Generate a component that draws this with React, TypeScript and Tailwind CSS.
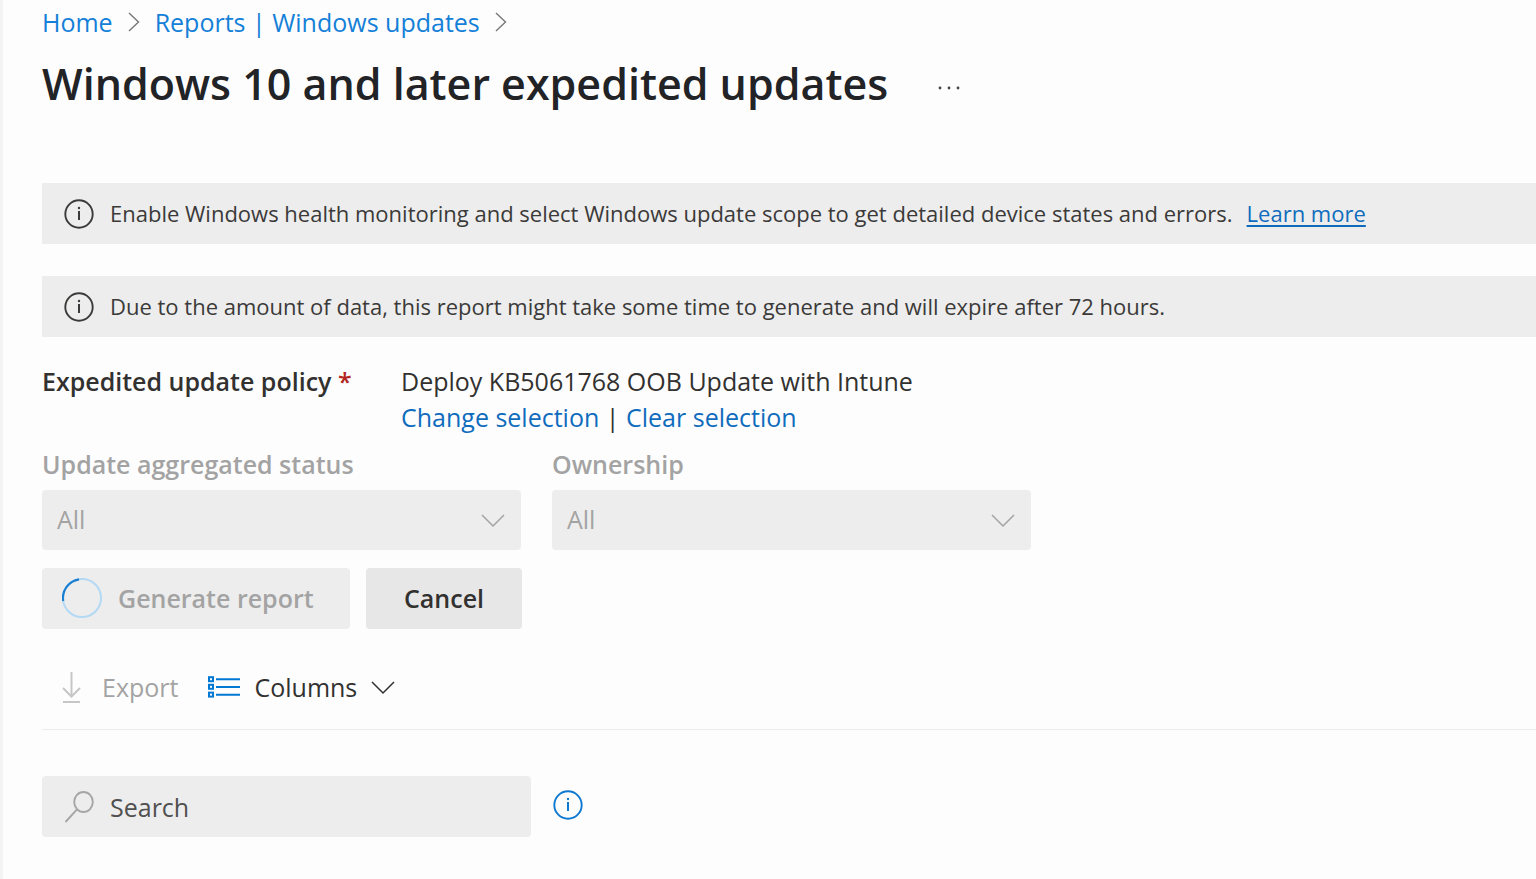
import React, { useState } from 'react';

interface IconProps {
  className?: string;
}

const ChevronRight: React.FC<IconProps> = ({ className }) => (
  <svg className={className} width="12" height="20" viewBox="0 0 12 20" fill="none" stroke="currentColor" strokeWidth="1.4" aria-hidden="true">
    <path d="M1 1 L10.5 10 L1 19" />
  </svg>
);

const ChevronDown: React.FC<IconProps> = ({ className }) => (
  <svg className={className} width="24" height="14" viewBox="0 0 24 14" fill="none" stroke="currentColor" strokeWidth="1.5" aria-hidden="true">
    <path d="M1 1 L12 12 L23 1" />
  </svg>
);

const InfoIcon: React.FC<IconProps> = ({ className }) => (
  <svg className={className} width="30" height="30" viewBox="0 0 30 30" fill="none" stroke="currentColor" aria-hidden="true">
    <circle cx="15" cy="15" r="13.7" strokeWidth="1.9" />
    <path d="M15 12 V21" strokeWidth="2" />
    <circle cx="15" cy="9" r="1.2" fill="currentColor" stroke="none" />
  </svg>
);

const Spinner = () => (
  <svg width="40" height="42" viewBox="0 0 40 42" fill="none" aria-hidden="true">
    <circle cx="20" cy="20" r="19" stroke="#b3d9f5" strokeWidth="2" />
    <path d="M1.2 23 A19 19 0 0 1 17 1.3" stroke="#1a7fd0" strokeWidth="2.2" />
  </svg>
);

const DownloadIcon = () => (
  <svg width="20" height="32" viewBox="0 0 20 32" fill="none" stroke="#c6c6c6" strokeWidth="2" aria-hidden="true">
    <path d="M9.5 0 V25" />
    <path d="M1 16 L9.5 24.5 L18 16" />
    <path d="M1 30 H18" />
  </svg>
);

const ColumnsIcon = () => (
  <svg width="32" height="24" viewBox="0 0 32 24" fill="none" stroke="#0078d4" strokeWidth="2" aria-hidden="true">
    <rect x="1" y="1.2" width="4" height="4" />
    <rect x="1" y="8.8" width="4" height="4" />
    <rect x="1" y="16.6" width="4" height="4" />
    <path d="M8 3.3 H32 M8 11 H32 M8 18.7 H32" />
  </svg>
);

const SearchIcon: React.FC<IconProps> = ({ className }) => (
  <svg className={className} width="30" height="32" viewBox="0 0 30 32" fill="none" stroke="#a6a6a6" strokeWidth="1.9" aria-hidden="true">
    <ellipse cx="19.5" cy="11" rx="9.3" ry="10" />
    <path d="M13 18.3 L1.5 31" />
  </svg>
);

interface FilterProps {
  id: string;
  label: string;
}

const Filter: React.FC<FilterProps> = ({ id, label }) => (
  <div className="w-[479px]">
    <label htmlFor={id} className="block text-[25px] leading-9 font-semibold text-[#a3a3a3]">
      {label}
    </label>
    <div className="relative mt-2">
      <select
        id={id}
        disabled
        className="block h-15 w-full appearance-none rounded-sm bg-[#ededed] px-[15px] text-[25px] text-[#a3a3a3] disabled:opacity-100"
      >
        <option>All</option>
      </select>
      <ChevronDown className="pointer-events-none absolute top-6 right-4 text-[#a3a3a3]" />
    </div>
  </div>
);

const Banner: React.FC<{ children: React.ReactNode }> = ({ children }) => (
  <div className="flex h-[61px] items-center bg-[#ededed] pl-[22px] text-[22px] text-[#3b3a39]">
    <InfoIcon className="mr-4 shrink-0" />
    <p>{children}</p>
  </div>
);

export default function App() {
  const [query, setQuery] = useState('');

  return (
    <main className="min-h-screen overflow-x-hidden border-l-3 border-[#f3f3f3] bg-[#fdfdfd] pb-10 pl-[39px] font-['Open_Sans','Noto_Sans',sans-serif] text-[#323130]">
      <nav aria-label="Breadcrumb" className="flex items-center gap-[15px] pt-1 text-[25px] leading-9 text-[#1480d8]">
        <a href="#home">Home</a>
        <ChevronRight className="text-[#777]" />
        <a href="#reports">Reports | Windows updates</a>
        <ChevronRight className="text-[#777]" />
      </nav>

      <header className="mt-[14px] flex items-center">
        <h1 className="text-[43px] leading-15 font-semibold text-[#222326]">
          Windows 10 and later expedited updates
        </h1>
        <button type="button" aria-label="More" className="ml-[46px] px-1 pt-3 pb-1 text-[#444]">
          <svg width="22" height="4" viewBox="0 0 22 4" fill="currentColor" aria-hidden="true">
            <circle cx="2" cy="2" r="1.4" />
            <circle cx="11" cy="2" r="1.4" />
            <circle cx="20" cy="2" r="1.4" />
          </svg>
        </button>
      </header>

      <section className="mt-[69px] flex flex-col gap-8">
        <Banner>
          Enable Windows health monitoring and select Windows update scope to get detailed device states and errors.
          <a href="#learn-more" className="ml-[14px] text-[#0f6cbd] underline decoration-2 underline-offset-3">Learn more</a>
        </Banner>
        <Banner>
          Due to the amount of data, this report might take some time to generate and will expire after 72 hours.
        </Banner>
      </section>

      <section className="mt-[26px] flex text-[25px] leading-9">
        <h2 className="w-[359px] shrink-0 font-semibold">
          Expedited update policy <span className="text-[#b3261e]">*</span>
        </h2>
        <div>
          <p>Deploy KB5061768 OOB Update with Intune</p>
          <p>
            <a href="#change" className="text-[#0f6cbd]">Change selection</a>
            {' | '}
            <a href="#clear" className="text-[#0f6cbd]">Clear selection</a>
          </p>
        </div>
      </section>

      <section className="mt-[11px] flex gap-[31px]">
        <Filter id="status" label="Update aggregated status" />
        <Filter id="ownership" label="Ownership" />
      </section>

      <div className="mt-[18px] flex gap-4 text-[25px] font-semibold">
        <button
          type="button"
          disabled
          className="flex h-[61px] w-[308px] items-center gap-4 rounded-sm bg-[#ededed] pl-5 text-[#a3a3a3]"
        >
          <Spinner />
          Generate report
        </button>
        <button type="button" className="h-[61px] w-[156px] rounded-sm bg-[#e7e7e7]">
          Cancel
        </button>
      </div>

      <div className="flex h-[101px] items-center gap-[30px] border-b border-[#ebebeb] pt-[18px] pl-5 text-[25px]">
        <button type="button" disabled className="flex items-center gap-5 text-[#a3a3a3]">
          <DownloadIcon />
          Export
        </button>
        <button type="button" className="flex items-center gap-[14px]">
          <ColumnsIcon />
          Columns
          <ChevronDown />
        </button>
      </div>

      <div className="mt-[46px] flex items-center gap-[22px]">
        <div className="relative w-[489px]">
          <SearchIcon className="pointer-events-none absolute top-[15px] left-[22px]" />
          <input
            type="search"
            aria-label="Search"
            placeholder="Search"
            value={query}
            onChange={e => setQuery(e.target.value)}
            className="block h-[61px] w-full rounded-sm bg-[#ededed] pr-4 pl-[68px] text-[25px] outline-none placeholder:text-[#505050]"
          />
        </div>
        <button type="button" aria-label="Search information" className="pb-[3px] text-[#0f78d0]">
          <InfoIcon />
        </button>
      </div>
    </main>
  );
}
